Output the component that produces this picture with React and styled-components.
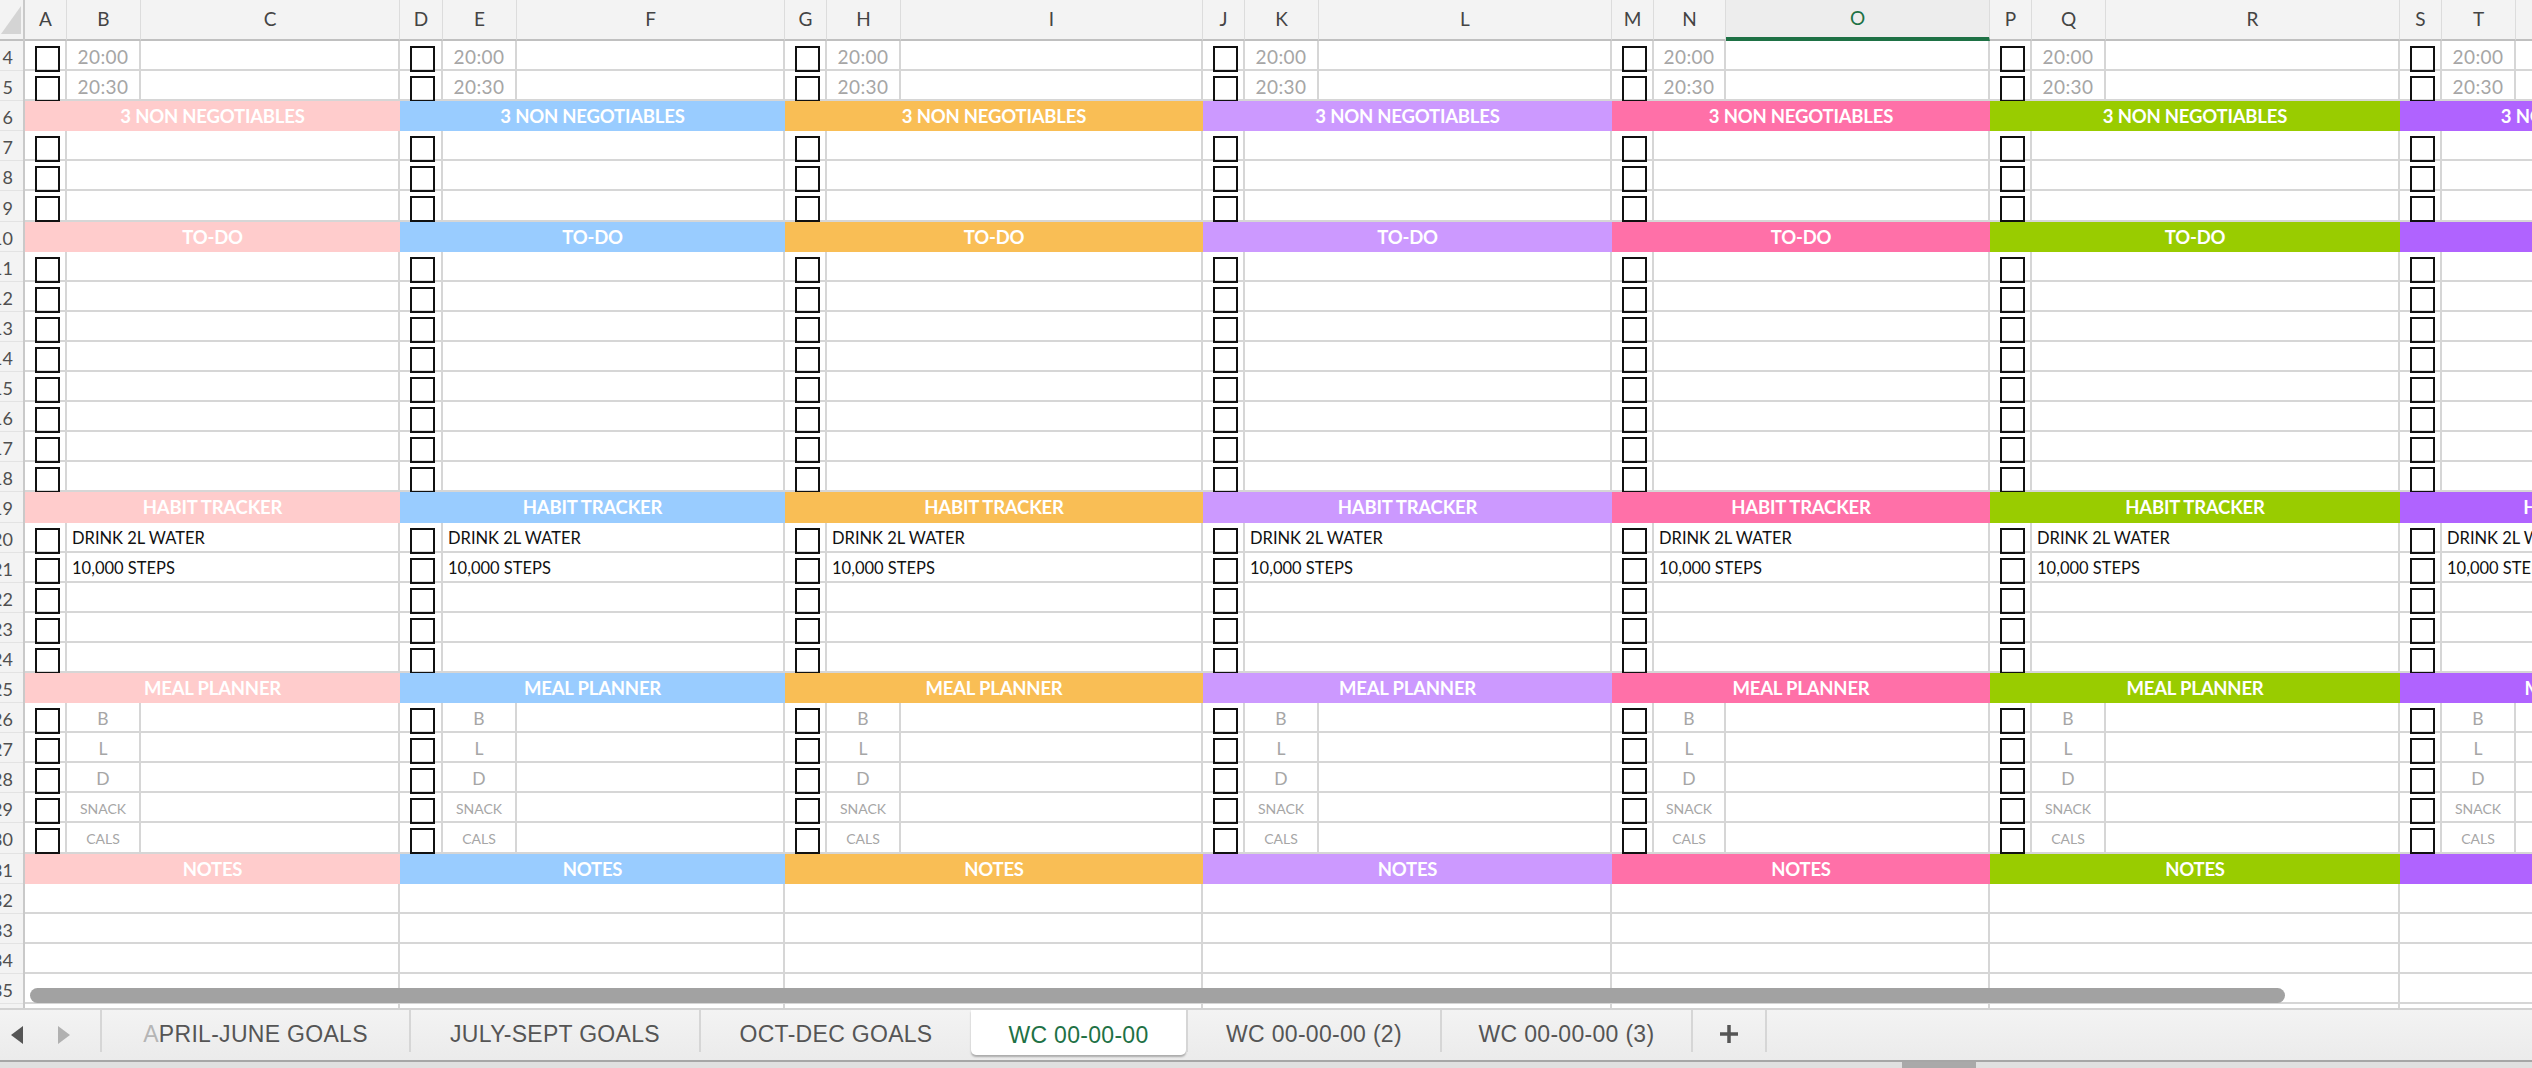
import React from "react";
import styled, { createGlobalStyle } from "styled-components";

const GlobalStyle = createGlobalStyle`
  html, body {
    margin: 0;
    padding: 0;
    background: #fff;
    overflow: hidden;
  }
  #root {
    width: 2532px;
    height: 1068px;
  }
`;

const ROW_H = 30.1;
const HEAD_H = 41;
const GRID = "#d6d6d6";
const GREEN = "#1e7145";

const days = [
  { color: "#ffcccc", cols: [["A", 42], ["B", 74], ["C", 259]] },
  { color: "#99ccff", cols: [["D", 43], ["E", 74], ["F", 268]] },
  { color: "#f9be55", cols: [["G", 42], ["H", 74], ["I", 302]] },
  { color: "#cc99ff", cols: [["J", 42], ["K", 74], ["L", 293]] },
  { color: "#ff70a8", cols: [["M", 42], ["N", 72], ["O", 264]] },
  { color: "#99cc00", cols: [["P", 42], ["Q", 74], ["R", 294]] },
  { color: "#b063ff", cols: [["S", 42], ["T", 74], ["U", 270]] },
];

const task = { type: "task" };
const note = { type: "note" };

const rows = [
  { type: "time", label: "20:00" },
  { type: "time", label: "20:30" },
  { type: "band", label: "3 NON NEGOTIABLES" },
  task, task, task,
  { type: "band", label: "TO-DO" },
  task, task, task, task, task, task, task, task,
  { type: "band", label: "HABIT TRACKER" },
  { type: "habit", label: "DRINK 2L WATER" },
  { type: "habit", label: "10,000 STEPS" },
  task, task, task,
  { type: "band", label: "MEAL PLANNER" },
  { type: "meal", label: "B" },
  { type: "meal", label: "L" },
  { type: "meal", label: "D" },
  { type: "meal", label: "SNACK", small: true },
  { type: "meal", label: "CALS", small: true },
  { type: "band", label: "NOTES" },
  note, note, note, note, note,
];

const tabs = [
  { name: "APRIL-JUNE GOALS", w: 309, faded: true },
  { name: "JULY-SEPT GOALS", w: 290 },
  { name: "OCT-DEC GOALS", w: 272 },
  { name: "WC 00-00-00", w: 215, active: true },
  { name: "WC 00-00-00 (2)", w: 254 },
  { name: "WC 00-00-00 (3)", w: 251 },
];

const Page = styled.div`
  width: 2532px;
  height: 1068px;
  display: flex;
  flex-direction: column;
  overflow: hidden;
  font-family: Lato, "Open Sans", sans-serif;
`;

const Sheet = styled.div`
  position: relative;
  display: flex;
  height: 1008px;
  flex: none;
  overflow: hidden;
`;

const RowHeads = styled.div`
  flex: 0 0 25px;
  width: 25px;
  min-width: 0;
  display: flex;
  flex-direction: column;
  background: #f3f3f3;
  border-right: 2px solid #c9c9c9;
  box-sizing: border-box;
  overflow: clip;
`;

const Corner = styled.div`
  height: ${HEAD_H}px;
  flex: none;
  box-sizing: border-box;
  border-bottom: 2px solid #c0c0c0;
  display: flex;
  align-items: flex-end;
`;

const RowNum = styled.div`
  height: ${ROW_H}px;
  flex: none;
  box-sizing: border-box;
  display: flex;
  justify-content: flex-end;
  align-items: center;
  padding: 3px 10px 0 0;
  overflow: clip;
  font-size: 18px;
  color: #505050;
  white-space: nowrap;
  border-bottom: 1px solid #e3e3e3;
`;

const DayCol = styled.div`
  flex: 0 0 ${(p) => p.$w}px;
  min-width: 0;
  display: flex;
  flex-direction: column;
`;

const HeadRow = styled.div`
  display: flex;
  height: ${HEAD_H}px;
  flex: none;
  background: #f3f3f3;
`;

const ColHead = styled.div`
  flex: 0 0 ${(p) => p.$w}px;
  box-sizing: border-box;
  display: flex;
  align-items: center;
  justify-content: center;
  padding-bottom: 2px;
  font-size: 19px;
  color: ${(p) => (p.$sel ? GREEN : "#444")};
  background: ${(p) => (p.$sel ? "#ededed" : "#f3f3f3")};
  border-right: 1px solid #dcdcdc;
  border-bottom: ${(p) => (p.$sel ? `4px solid ${GREEN}` : "2px solid #c0c0c0")};
`;

const BodyRow = styled.div`
  display: flex;
  height: ${ROW_H}px;
  flex: none;
`;

const Cell = styled.div`
  flex: 0 0 ${(p) => p.$w}px;
  box-sizing: border-box;
  display: flex;
  align-items: center;
  justify-content: ${(p) => p.$align || "flex-start"};
  padding-top: 2px;
  border-bottom: 2px solid ${GRID};
  border-right: 2px solid ${GRID};
  white-space: nowrap;
`;

const Band = styled.div`
  flex: 1;
  display: flex;
  align-items: center;
  justify-content: center;
  background: ${(p) => p.$color};
  color: #fff;
  font-weight: 700;
  font-size: 18.5px;
  letter-spacing: -0.2px;
  white-space: nowrap;
`;

const Box = styled.span`
  width: 25px;
  height: 26px;
  box-sizing: border-box;
  border: 2.5px solid #111;
  margin-left: 10px;
  align-self: flex-start;
  margin-top: 3px;
  flex: none;
`;

const TimeText = styled.span`
  font-size: 19px;
  letter-spacing: 0.4px;
  color: #a6a6a6;
`;

const MealText = styled.span`
  font-size: ${(p) => (p.$small ? 14 : 17.5)}px;
  color: #a6a6a6;
`;

const HabitText = styled.span`
  font-size: 16.5px;
  color: #111;
  padding-left: 5px;
`;

const ScrollThumb = styled.div`
  position: absolute;
  left: 30px;
  top: 988px;
  width: 2255px;
  height: 15px;
  border-radius: 8px;
  background: #a2a2a2;
`;

const TabBar = styled.div`
  height: 52px;
  flex: none;
  box-sizing: border-box;
  display: flex;
  align-items: flex-start;
  background: linear-gradient(#f3f3f3, #ebebeb);
  border-top: 2px solid #d2d2d2;
  font-family: "Liberation Sans", Arial, sans-serif;
`;

const Nav = styled.div`
  flex: 0 0 100px;
  height: 100%;
  display: flex;
  align-items: center;
  gap: 33px;
  padding-left: 10px;
  box-sizing: border-box;
`;

const Tab = styled.div`
  flex: 0 0 ${(p) => p.$w}px;
  box-sizing: border-box;
  height: ${(p) => (p.$active ? 45 : 42)}px;
  padding-top: 6px;
  display: flex;
  align-items: center;
  justify-content: center;
  font-size: 23px;
  letter-spacing: 0.3px;
  color: ${(p) => (p.$active ? GREEN : "#555")};
  background: ${(p) => (p.$active ? "#fff" : "transparent")};
  border-left: ${(p) => (p.$active ? "none" : "2px solid #d6d6d6")};
  border-radius: ${(p) => (p.$active ? "0 0 5px 5px" : "0")};
  box-shadow: ${(p) => (p.$active ? "0 2px 2px rgba(0,0,0,0.28)" : "none")};
  white-space: nowrap;
`;

const Faded = styled.span`
  color: #b5b5b5;
`;

const AddTab = styled.div`
  flex: 0 0 76px;
  box-sizing: border-box;
  height: 42px;
  padding-top: 6px;
  display: flex;
  align-items: center;
  justify-content: center;
  border-left: 2px solid #d6d6d6;
  border-right: 2px solid #d6d6d6;
`;

const StatusStrip = styled.div`
  height: 8px;
  flex: none;
  box-sizing: border-box;
  border-top: 2px solid #a6a6a6;
  background: #e0e0e0;
  display: flex;
  padding-left: 1902px;
`;

const StripThumb = styled.div`
  width: 74px;
  background: #a9a9a9;
`;

const Arrow = ({ dir, color }) => (
  <svg width="14" height="18" viewBox="0 0 14 18">
    <polygon
      points={dir === "left" ? "13,0 13,18 1,9" : "1,0 1,18 13,9"}
      fill={color}
    />
  </svg>
);

const PlusIcon = () => (
  <svg width="22" height="22" viewBox="0 0 22 22">
    <path d="M11 2v18M2 11h18" stroke="#555" strokeWidth="3.5" />
  </svg>
);

const renderCells = (row, cols, color) => {
  const [a, b, c] = cols.map((x) => x[1]);
  switch (row.type) {
    case "band":
      return <Band $color={color}>{row.label}</Band>;
    case "time":
      return (
        <>
          <Cell $w={a}><Box /></Cell>
          <Cell $w={b} $align="center"><TimeText>{row.label}</TimeText></Cell>
          <Cell $w={c} />
        </>
      );
    case "meal":
      return (
        <>
          <Cell $w={a}><Box /></Cell>
          <Cell $w={b} $align="center">
            <MealText $small={row.small}>{row.label}</MealText>
          </Cell>
          <Cell $w={c} />
        </>
      );
    case "habit":
      return (
        <>
          <Cell $w={a}><Box /></Cell>
          <Cell $w={b + c}><HabitText>{row.label}</HabitText></Cell>
        </>
      );
    case "task":
      return (
        <>
          <Cell $w={a}><Box /></Cell>
          <Cell $w={b + c} />
        </>
      );
    default:
      return <Cell $w={a + b + c} />;
  }
};

const Day = ({ day }) => {
  const total = day.cols.reduce((s, c) => s + c[1], 0);
  return (
    <DayCol $w={total}>
      <HeadRow>
        {day.cols.map(([letter, w]) => (
          <ColHead key={letter} $w={w} $sel={letter === "O"}>
            {letter}
          </ColHead>
        ))}
      </HeadRow>
      {rows.map((row, i) => (
        <BodyRow key={i}>{renderCells(row, day.cols, day.color)}</BodyRow>
      ))}
    </DayCol>
  );
};

export default function App() {
  return (
    <Page>
      <GlobalStyle />
      <Sheet>
        <RowHeads>
          <Corner>
            <svg width="23" height="39" viewBox="0 0 23 39">
              <polygon points="21,6 21,34 1,34" fill="#d4d4d4" />
            </svg>
          </Corner>
          {rows.map((_, i) => (
            <RowNum key={i}>{i + 4}</RowNum>
          ))}
        </RowHeads>
        {days.map((day) => (
          <Day key={day.cols[0][0]} day={day} />
        ))}
        <ScrollThumb />
      </Sheet>
      <TabBar>
        <Nav>
          <Arrow dir="left" color="#555" />
          <Arrow dir="right" color="#b0b0b0" />
        </Nav>
        {tabs.map((t) => (
          <Tab key={t.name} $w={t.w} $active={t.active}>
            {t.faded ? (
              <>
                <Faded>A</Faded>
                {t.name.slice(1)}
              </>
            ) : (
              t.name
            )}
          </Tab>
        ))}
        <AddTab>
          <PlusIcon />
        </AddTab>
      </TabBar>
      <StatusStrip>
        <StripThumb />
      </StatusStrip>
    </Page>
  );
}
